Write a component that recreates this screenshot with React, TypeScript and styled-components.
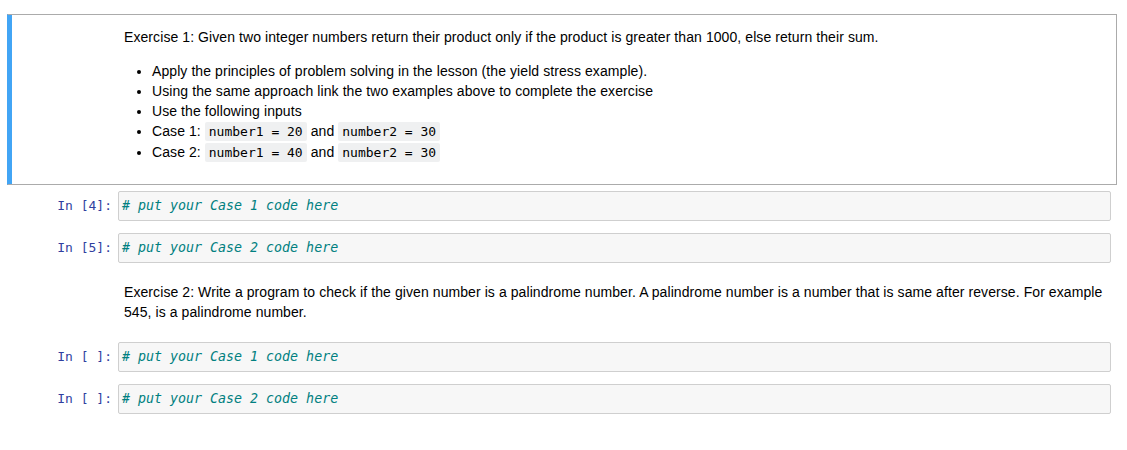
import styled, { createGlobalStyle, css } from 'styled-components';

const GlobalStyle = createGlobalStyle`
    html, body {
        margin: 0;
        padding: 0;
        background: #ffffff;
    }
`;

const Notebook = styled.div`
    padding: 14px 0 0 7px;
    width: 1110px;
`;

const Cell = styled.div<{ $selected?: boolean }>`
    display: flex;
    padding: 5px;
    border: 1px solid transparent;
    border-radius: 2px;

    ${({ $selected }) =>
        $selected &&
        css`
            border-color: #ababab;
            border-left-color: #42a5f5;
            box-shadow: inset 4px 0 0 #42a5f5;
            border-radius: 0;
        `}
`;

const Prompt = styled.div`
    flex: 0 0 105px;
    box-sizing: border-box;
    padding: 5px 6px 0 0;
    text-align: right;
    font-family: 'DejaVu Sans Mono', monospace;
    font-size: 13px;
    line-height: 20px;
    color: #303f9f;
`;

const InputArea = styled.div`
    flex: 1;
    border: 1px solid #cfcfcf;
    border-radius: 2px;
    background: #f7f7f7;
    padding: 4px 3px;
    font-family: 'DejaVu Sans Mono', monospace;
    font-size: 13.3px;
    line-height: 20px;
`;

const Comment = styled.span`
    color: #008080;
    font-style: italic;
`;

const Rendered = styled.div<{ $bottom: number }>`
    flex: 1;
    padding: 7px 0 ${({ $bottom }) => $bottom}px 6px;
    font-family: 'Liberation Sans', Arial, sans-serif;
    font-size: 14px;
    letter-spacing: 0.08px;
    line-height: 20px;
    color: #000;
`;

const Para = styled.p`
    margin: 0;
`;

const List = styled.ul`
    margin: 14px 0 7px;
    padding-left: 28px;
    list-style: disc;
`;

const Item = styled.li<{ $tall?: boolean }>`
    line-height: ${({ $tall }) => ($tall ? 21 : 20)}px;
`;

const Code = styled.code`
    font-family: 'DejaVu Sans Mono', monospace;
    font-size: 13px;
    letter-spacing: 0;
    background: #eff0f1;
    padding: 2px 4px;
    border-radius: 2px;
`;

const CodeCell = ({ count, text }: { count: string; text: string }) => (
    <Cell>
        <Prompt>In [{count}]:</Prompt>
        <InputArea>
            <Comment>{text}</Comment>
        </InputArea>
    </Cell>
);

export default function App() {
    return (
        <>
            <GlobalStyle />
            <Notebook>
                <Cell $selected>
                    <Prompt />
                    <Rendered $bottom={9}>
                        <Para>
                            Exercise 1: Given two integer numbers return their product only if the
                            product is greater than 1000, else return their sum.
                        </Para>
                        <List>
                            <Item>
                                Apply the principles of problem solving in the lesson (the yield
                                stress example).
                            </Item>
                            <Item>
                                Using the same approach link the two examples above to complete the
                                exercise
                            </Item>
                            <Item>Use the following inputs</Item>
                            <Item $tall>
                                Case 1: <Code>number1 = 20</Code> and <Code>number2 = 30</Code>
                            </Item>
                            <Item $tall>
                                Case 2: <Code>number1 = 40</Code> and <Code>number2 = 30</Code>
                            </Item>
                        </List>
                    </Rendered>
                </Cell>
                <CodeCell count="4" text="# put your Case 1 code here" />
                <CodeCell count="5" text="# put your Case 2 code here" />
                <Cell>
                    <Prompt />
                    <Rendered $bottom={8}>
                        <Para>
                            Exercise 2: Write a program to check if the given number is a palindrome
                            number. A palindrome number is a number that is same after reverse. For
                            example 545, is a palindrome number.
                        </Para>
                    </Rendered>
                </Cell>
                <CodeCell count="&nbsp;" text="# put your Case 1 code here" />
                <CodeCell count="&nbsp;" text="# put your Case 2 code here" />
            </Notebook>
        </>
    );
}
